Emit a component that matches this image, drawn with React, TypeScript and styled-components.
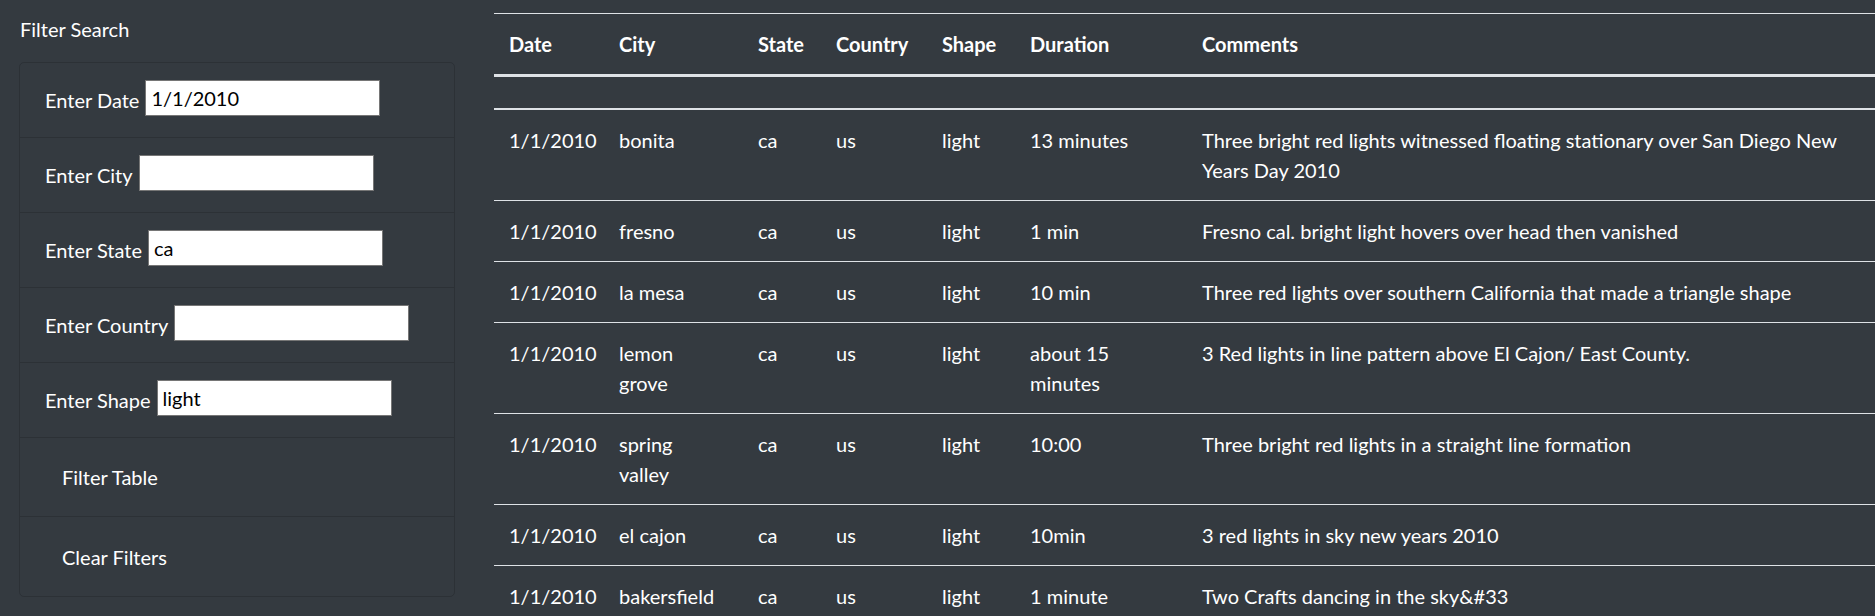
import React from 'react'
import styled, { createGlobalStyle } from 'styled-components'

const GlobalStyle = createGlobalStyle`
	html, body {
		margin: 0;
		padding: 0;
		background: #343a40;
		overflow: hidden;
	}
	body {
		font-family: Lato, "Segoe UI", "Liberation Sans", sans-serif;
		font-size: 20px;
		line-height: 30px;
		color: #fff;
	}
	* {
		box-sizing: border-box;
	}
`

const StyledPage = styled('div')`
	display: grid;
	grid-template-columns: 436px 1fr;
	column-gap: 39px;
	padding-left: 19px;
	min-height: 616px;
	background: #343a40;
`

const StyledSidebar = styled('aside')`
	display: flex;
	flex-direction: column;
	padding-top: 14px;
`

const StyledSidebarTitle = styled('div')`
	padding-left: 1px;
	margin-bottom: 18px;
`

const StyledCard = styled('div')`
	display: flex;
	flex-direction: column;
	border: 1px solid rgba(0, 0, 0, 0.15);
	border-radius: 5px;
	overflow: hidden;
`

const StyledListItem = styled('div')<{ $tall?: boolean }>`
	display: flex;
	align-items: center;
	gap: 6px;
	height: ${(p) => (p.$tall ? '79px' : '75px')};
	padding: 0 25px;
	border-bottom: 1px solid rgba(0, 0, 0, 0.15);

	&:last-child {
		border-bottom: none;
	}
`

const StyledInput = styled('input')`
	width: 235px;
	height: 36px;
	margin-bottom: 5px;
	padding: 0 5px;
	border: 1px solid #767676;
	background: #fff;
	color: #000;
	font-family: inherit;
	font-size: 20px;
	outline: none;
`

const StyledButton = styled('button')`
	padding: 0 0 0 17px;
	border: none;
	background: transparent;
	color: #fff;
	font-family: inherit;
	font-size: 20px;
	line-height: 30px;
	cursor: pointer;
`

const StyledMain = styled('main')`
	padding-top: 13px;
`

const StyledTable = styled('table')`
	width: 100%;
	table-layout: fixed;
	border-collapse: collapse;
	color: #fff;

	th, td {
		padding: 15px;
		text-align: left;
		vertical-align: top;
		border-top: 1px solid #dee2e6;
	}

	td:nth-child(2) {
		padding-right: 36px;
	}

	th {
		font-weight: 700;
		border-bottom: 3px solid #dee2e6;
	}
`

const StyledSpacerRow = styled('tr')`
	td {
		height: 33px;
		border-bottom: 2px solid #dee2e6;
	}
`

const columns = [
	{ label: 'Date', width: 110 },
	{ label: 'City', width: 139 },
	{ label: 'State', width: 78 },
	{ label: 'Country', width: 106 },
	{ label: 'Shape', width: 88 },
	{ label: 'Duration', width: 172 },
	{ label: 'Comments', width: undefined },
]

const sightings = [
	['1/1/2010', 'bonita', 'ca', 'us', 'light', '13 minutes', 'Three bright red lights witnessed floating stationary over San Diego New Years Day 2010'],
	['1/1/2010', 'fresno', 'ca', 'us', 'light', '1 min', 'Fresno cal. bright light hovers over head then vanished'],
	['1/1/2010', 'la mesa', 'ca', 'us', 'light', '10 min', 'Three red lights over southern California that made a triangle shape'],
	['1/1/2010', 'lemon grove', 'ca', 'us', 'light', 'about 15 minutes', '3 Red lights in line pattern above El Cajon/ East County.'],
	['1/1/2010', 'spring valley', 'ca', 'us', 'light', '10:00', 'Three bright red lights in a straight line formation'],
	['1/1/2010', 'el cajon', 'ca', 'us', 'light', '10min', '3 red lights in sky new years 2010'],
	['1/1/2010', 'bakersfield', 'ca', 'us', 'light', '1 minute', 'Two Crafts dancing in the sky&#33'],
]

const filters = [
	{ label: 'Enter Date', value: '1/1/2010' },
	{ label: 'Enter City', value: '' },
	{ label: 'Enter State', value: 'ca' },
	{ label: 'Enter Country', value: '' },
	{ label: 'Enter Shape', value: 'light' },
]

const App = () => {
	return (
		<>
			<GlobalStyle />
			<StyledPage>
				<StyledSidebar>
					<StyledSidebarTitle>Filter Search</StyledSidebarTitle>
					<StyledCard>
						{filters.map((f) => (
							<StyledListItem key={f.label}>
								<label>{f.label}</label>
								<StyledInput type='text' defaultValue={f.value} />
							</StyledListItem>
						))}
						<StyledListItem $tall>
							<StyledButton>Filter Table</StyledButton>
						</StyledListItem>
						<StyledListItem $tall>
							<StyledButton>Clear Filters</StyledButton>
						</StyledListItem>
					</StyledCard>
				</StyledSidebar>
				<StyledMain>
					<StyledTable>
						<colgroup>
							{columns.map((c) => (
								<col key={c.label} style={c.width ? { width: c.width } : undefined} />
							))}
						</colgroup>
						<thead>
							<tr>
								{columns.map((c) => (
									<th key={c.label}>{c.label}</th>
								))}
							</tr>
						</thead>
						<tbody>
							<StyledSpacerRow>
								{columns.map((c) => (
									<td key={c.label}></td>
								))}
							</StyledSpacerRow>
							{sightings.map((row, i) => (
								<tr key={i}>
									{row.map((cell, j) => (
										<td key={j}>{cell}</td>
									))}
								</tr>
							))}
						</tbody>
					</StyledTable>
				</StyledMain>
			</StyledPage>
		</>
	)
}

export default App
